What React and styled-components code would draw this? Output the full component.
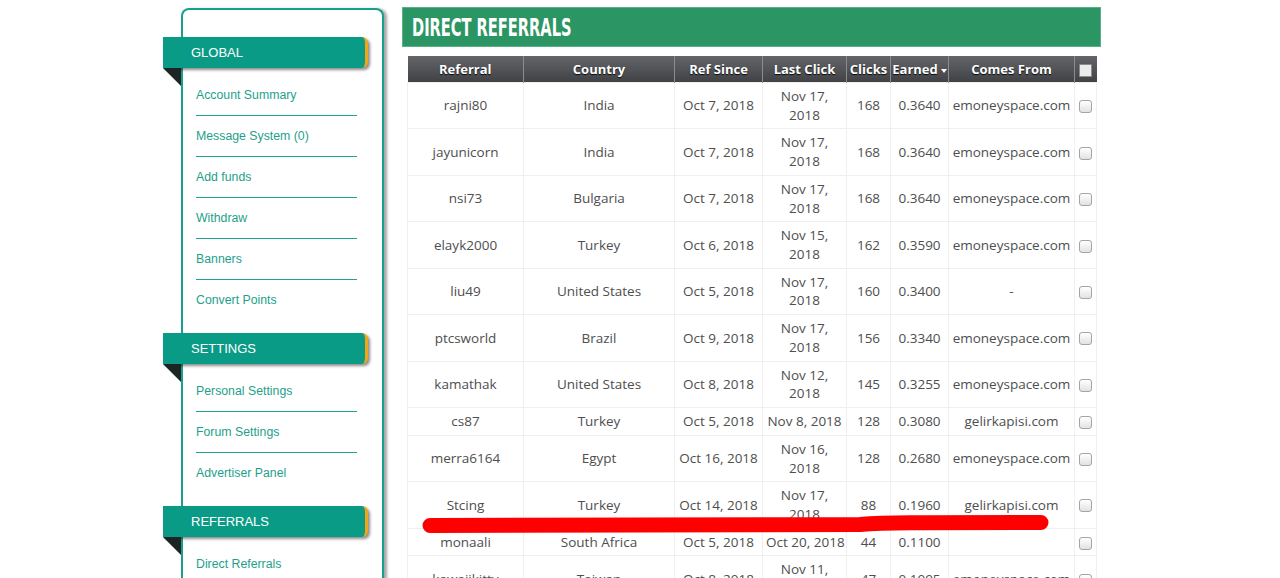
import React from 'react';
import styled, { createGlobalStyle } from 'styled-components';

const GlobalStyle = createGlobalStyle`
  html, body { margin: 0; padding: 0; overflow: hidden; background: #fff; }
  body { font-family: "Liberation Sans", Arial, sans-serif; }
`;

const Page = styled.div`
  position: relative;
  display: flex;
  align-items: flex-start;
  gap: 18px;
  width: 1280px;
  height: 578px;
  box-sizing: border-box;
  padding: 7px 0 0 163px;
  overflow: hidden;
`;

const Sidebar = styled.aside`
  flex: none;
  width: 221px;
  box-sizing: border-box;
  padding-left: 18px;
  margin-top: 1px;
`;

const SideBox = styled.div`
  border: 2px solid #17a08c;
  border-bottom: none;
  border-radius: 8px 8px 0 0;
  box-shadow: 3px 1px 3px rgba(0, 0, 0, 0.35);
  background: #fff;
  padding: 27px 0 40px;
`;

const Section = styled.section`
  margin-bottom: 12px;
`;

const Band = styled.div`
  position: relative;
  margin: 0 0 7px -20px;
  width: 205px;
  height: 31px;
  box-sizing: border-box;
  padding-left: 28px;
  background: #0a9b86;
  color: #fff;
  font-size: 13px;
  line-height: 31px;
  border-right: 3px solid #f2a516;
  border-radius: 0 6px 6px 0;
  box-shadow: 2px 2px 3px rgba(0, 0, 0, 0.45);

  &::after {
    content: '';
    position: absolute;
    left: 0;
    top: 31px;
    width: 0;
    height: 0;
    border-style: solid;
    border-width: 0 18px 18px 0;
    border-color: transparent #1c2424 transparent transparent;
  }
`;

const NavLink = styled.a`
  display: block;
  margin: 0 25px 0 13px;
  height: 40px;
  line-height: 40px;
  border-bottom: 1px solid #1fa28e;
  color: #1e9f8b;
  font-size: 12.3px;
  text-decoration: none;

  &:last-child {
    border-bottom-color: transparent;
  }
`;

const Main = styled.main`
  flex: none;
  width: 699px;
`;

const TitleBar = styled.h1`
  margin: 0;
  height: 40px;
  box-sizing: border-box;
  display: flex;
  align-items: center;
  padding-left: 9px;
  background: #2b9564;
  border: 1px solid #58b189;
  color: #fff;
  overflow: hidden;
`;

const TitleText = styled.span`
  display: inline-block;
  font-family: "DejaVu Sans Condensed", "DejaVu Sans", sans-serif;
  font-weight: bold;
  font-size: 25px;
  transform: scaleX(0.65);
  transform-origin: left center;
  white-space: nowrap;
`;

const TableWrap = styled.div`
  margin: 9px 5px 0;
`;

const Table = styled.table`
  border-collapse: collapse;
  table-layout: fixed;
  width: 689px;
  font-family: "Open Sans", sans-serif;
`;

const Th = styled.th`
  height: 26px;
  padding: 0;
  background: linear-gradient(#636569, #404246);
  color: #fff;
  font-size: 13px;
  font-weight: bold;
  text-align: center;
  white-space: nowrap;
  text-shadow: 0 1px 1px rgba(0, 0, 0, 0.9);
  border-left: 1px solid #8a8c8f;

  &:first-child {
    border-left: none;
  }
`;

const Td = styled.td`
  padding: 4px 3px;
  border: 1px solid #efefef;
  color: #4e4e4e;
  font-size: 13.5px;
  line-height: 18.72px;
  text-align: center;
  vertical-align: middle;
  white-space: pre;
`;

const SortArrow = styled.span`
  display: inline-block;
  margin-left: 3px;
  vertical-align: middle;
  border-left: 3px solid transparent;
  border-right: 3px solid transparent;
  border-top: 4px solid #fff;
`;

const Check = styled.span`
  display: inline-block;
  width: 11px;
  height: 11px;
  vertical-align: middle;
  border: 1px solid ${(p) => (p.$head ? '#8d8d8d' : '#a5a5a5')};
  border-radius: ${(p) => (p.$head ? '1px' : '3px')};
  background: ${(p) => (p.$head ? '#ececec' : 'linear-gradient(#ffffff, #e2e2e2)')};
`;

const Scribble = styled.svg`
  position: absolute;
  left: 0;
  top: 0;
  pointer-events: none;
`;

const menu = [
  { title: 'GLOBAL', links: ['Account Summary', 'Message System (0)', 'Add funds', 'Withdraw', 'Banners', 'Convert Points'] },
  { title: 'SETTINGS', links: ['Personal Settings', 'Forum Settings', 'Advertiser Panel'] },
  { title: 'REFERRALS', links: ['Direct Referrals'] },
];

const cols = [116, 151, 88, 84, 44, 58, 126, 22];

const rows = [
  ['rajni80', 'India', 'Oct 7, 2018', 'Nov 17,\n2018', '168', '0.3640', 'emoneyspace.com'],
  ['jayunicorn', 'India', 'Oct 7, 2018', 'Nov 17,\n2018', '168', '0.3640', 'emoneyspace.com'],
  ['nsi73', 'Bulgaria', 'Oct 7, 2018', 'Nov 17,\n2018', '168', '0.3640', 'emoneyspace.com'],
  ['elayk2000', 'Turkey', 'Oct 6, 2018', 'Nov 15,\n2018', '162', '0.3590', 'emoneyspace.com'],
  ['liu49', 'United States', 'Oct 5, 2018', 'Nov 17,\n2018', '160', '0.3400', '-'],
  ['ptcsworld', 'Brazil', 'Oct 9, 2018', 'Nov 17,\n2018', '156', '0.3340', 'emoneyspace.com'],
  ['kamathak', 'United States', 'Oct 8, 2018', 'Nov 12,\n2018', '145', '0.3255', 'emoneyspace.com'],
  ['cs87', 'Turkey', 'Oct 5, 2018', 'Nov 8, 2018', '128', '0.3080', 'gelirkapisi.com'],
  ['merra6164', 'Egypt', 'Oct 16, 2018', 'Nov 16,\n2018', '128', '0.2680', 'emoneyspace.com'],
  ['Stcing', 'Turkey', 'Oct 14, 2018', 'Nov 17,\n2018', '88', '0.1960', 'gelirkapisi.com'],
  ['monaali', 'South Africa', 'Oct 5, 2018', 'Oct 20, 2018', '44', '0.1100', ''],
  ['kawaiikitty', 'Taiwan', 'Oct 8, 2018', 'Nov 11,\n2018', '47', '0.1095', 'emoneyspace.com'],
];

export default function App() {
  return (
    <Page>
      <GlobalStyle />
      <Sidebar>
        <SideBox>
          {menu.map((s) => (
            <Section key={s.title}>
              <Band>{s.title}</Band>
              {s.links.map((l) => (
                <NavLink key={l} href="#">{l}</NavLink>
              ))}
            </Section>
          ))}
        </SideBox>
      </Sidebar>
      <Main>
        <TitleBar>
          <TitleText>DIRECT REFERRALS</TitleText>
        </TitleBar>
        <TableWrap>
          <Table>
            <colgroup>
              {cols.map((w, i) => (
                <col key={i} style={{ width: w }} />
              ))}
            </colgroup>
            <thead>
              <tr>
                <Th>Referral</Th>
                <Th>Country</Th>
                <Th>Ref Since</Th>
                <Th>Last Click</Th>
                <Th>Clicks</Th>
                <Th>Earned<SortArrow /></Th>
                <Th>Comes From</Th>
                <Th><Check $head /></Th>
              </tr>
            </thead>
            <tbody>
              {rows.map((r) => (
                <tr key={r[0]}>
                  {r.map((c, i) => (
                    <Td key={i}>{c}</Td>
                  ))}
                  <Td><Check /></Td>
                </tr>
              ))}
            </tbody>
          </Table>
        </TableWrap>
      </Main>
      <Scribble width="1280" height="578">
        <path
          d="M430 525.5 L 860 524.5 C 885 522.5, 910 522.5, 1041 522.5"
          stroke="#ff0000"
          strokeWidth="15"
          strokeLinecap="round"
          fill="none"
        />
      </Scribble>
    </Page>
  );
}
